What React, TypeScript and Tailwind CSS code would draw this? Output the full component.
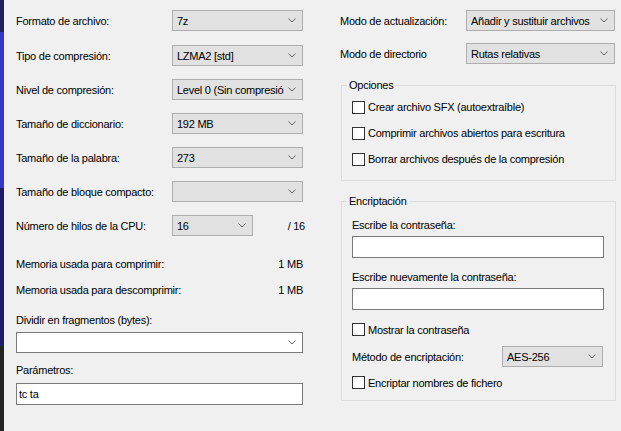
import React from "react";

const FONT = { fontFamily: '"Liberation Sans", Arial, sans-serif' };

function Chevron() {
  return (
    <svg width="8" height="5" viewBox="0 0 8 5" className="shrink-0">
      <polyline points="0.5,0.5 4,4 7.5,0.5" fill="none" stroke="#606060" strokeWidth="1" />
    </svg>
  );
}

function Combo({ value, className = "", white = false }: { value: string; className?: string; white?: boolean }) {
  return (
    <div
      className={`h-[21px] flex items-center border pl-[4px] pr-[6px] ${
        white ? "bg-white border-[#7a7a7a]" : "bg-[#e1e1e1] border-[#adadad]"
      } ${className}`}
    >
      <span className="flex-1 overflow-hidden whitespace-nowrap mr-[4px]">{value}</span>
      <Chevron />
    </div>
  );
}

function TextBox({ value = "", className = "" }: { value?: string; className?: string }) {
  return (
    <div className={`h-[22px] flex items-center bg-white border border-[#7a7a7a] px-[2px] ${className}`}>
      {value}
    </div>
  );
}

function Check({ label, className = "" }: { label: string; className?: string }) {
  return (
    <div className={`flex items-center ${className}`}>
      <span className="w-[13px] h-[13px] bg-white border border-[#333333] shrink-0" />
      <span className="ml-[3px] whitespace-nowrap">{label}</span>
    </div>
  );
}

const leftRows: { label: string; value: string }[] = [
  { label: "Formato de archivo:", value: "7z" },
  { label: "Tipo de compresión:", value: "LZMA2 [std]" },
  { label: "Nivel de compresión:", value: "Level 0 (Sin compresión)" },
  { label: "Tamaño de diccionario:", value: "192 MB" },
  { label: "Tamaño de la palabra:", value: "273" },
  { label: "Tamaño de bloque compacto:", value: "" },
];

export default function App() {
  return (
    <div
      className="w-[621px] h-[431px] overflow-hidden flex bg-[#f0f0f0] text-[11px] leading-[14px] tracking-[-0.25px] text-black"
      style={FONT}
    >
      {/* desktop behind the dialog */}
      <div className="w-[4px] h-full flex flex-col shrink-0">
        <div className="h-[32px] bg-[#1f1f5c]" />
        <div className="h-[156px] bg-[#3a36c0]" />
        <div className="h-[158px] bg-[#1e1c6a]" />
        <div className="flex-1 bg-[#232323]" />
      </div>

      {/* left column */}
      <div className="w-[306px] shrink-0 flex flex-col pl-[12px] pt-[10px]">
        {leftRows.map((r, i) => (
          <div key={r.label} className={`flex items-center h-[21px] ${i === 0 ? "mb-[14px]" : "mb-[13px]"}`}>
            <span className="w-[156px] shrink-0 whitespace-nowrap">{r.label}</span>
            <Combo value={r.value} className="w-[131px]" />
          </div>
        ))}
        <div className="flex items-center h-[21px]">
          <span className="w-[156px] shrink-0 whitespace-nowrap">Número de hilos de la CPU:</span>
          <Combo value="16" className="w-[81px]" />
          <span className="flex-1 text-right mr-[5px]">/ 16</span>
        </div>
        <div className="flex justify-between w-[287px] mt-[21px]">
          <span>Memoria usada para comprimir:</span>
          <span>1 MB</span>
        </div>
        <div className="flex justify-between w-[287px] mt-[12px]">
          <span>Memoria usada para descomprimir:</span>
          <span>1 MB</span>
        </div>
        <div className="mt-[16px]">Dividir en fragmentos (bytes):</div>
        <Combo value="" white className="w-[287px] mt-[5px]" />
        <div className="mt-[10px]">Parámetros:</div>
        <TextBox value="tc ta" className="w-[287px] mt-[6px]" />
      </div>

      {/* right column */}
      <div className="flex-1 flex flex-col pl-[30px] pt-[10px]">
        <div className="flex items-center h-[21px]">
          <span className="w-[126px] shrink-0 whitespace-nowrap">Modo de actualización:</span>
          <Combo value="Añadir y sustituir archivos" className="w-[149px]" />
        </div>
        <div className="flex items-center h-[21px] mt-[12px]">
          <span className="w-[126px] shrink-0 whitespace-nowrap">Modo de directorio</span>
          <Combo value="Rutas relativas" className="w-[149px]" />
        </div>

        <fieldset className="ml-[1px] w-[275px] h-[103px] mt-[14px] border border-[#dcdcdc] pl-[5px] pt-[2px]">
          <legend className="px-[2px] leading-[14px]">Opciones</legend>
          <div className="pl-[5px] flex flex-col">
            <Check label="Crear archivo SFX (autoextraíble)" className="h-[26px]" />
            <Check label="Comprimir archivos abiertos para escritura" className="h-[26px]" />
            <Check label="Borrar archivos después de la compresión" className="h-[26px]" />
          </div>
        </fieldset>

        <fieldset className="ml-[1px] w-[275px] h-[207px] mt-[13px] border border-[#dcdcdc] pl-[5px] pt-[10px]">
          <legend className="px-[2px] leading-[14px]">Encriptación</legend>
          <div className="pl-[5px] flex flex-col">
            <div>Escribe la contraseña:</div>
            <TextBox className="w-[252px] mt-[4px]" />
            <div className="mt-[12px]">Escribe nuevamente la contraseña:</div>
            <TextBox className="w-[252px] mt-[4px]" />
            <Check label="Mostrar la contraseña" className="h-[13px] mt-[13px]" />
            <div className="flex items-center h-[21px] mt-[10px]">
              <span className="w-[150px] shrink-0 whitespace-nowrap">Método de encriptación:</span>
              <Combo value="AES-256" className="w-[101px]" />
            </div>
            <Check label="Encriptar nombres de fichero" className="h-[13px] mt-[9px]" />
          </div>
        </fieldset>
      </div>
    </div>
  );
}
